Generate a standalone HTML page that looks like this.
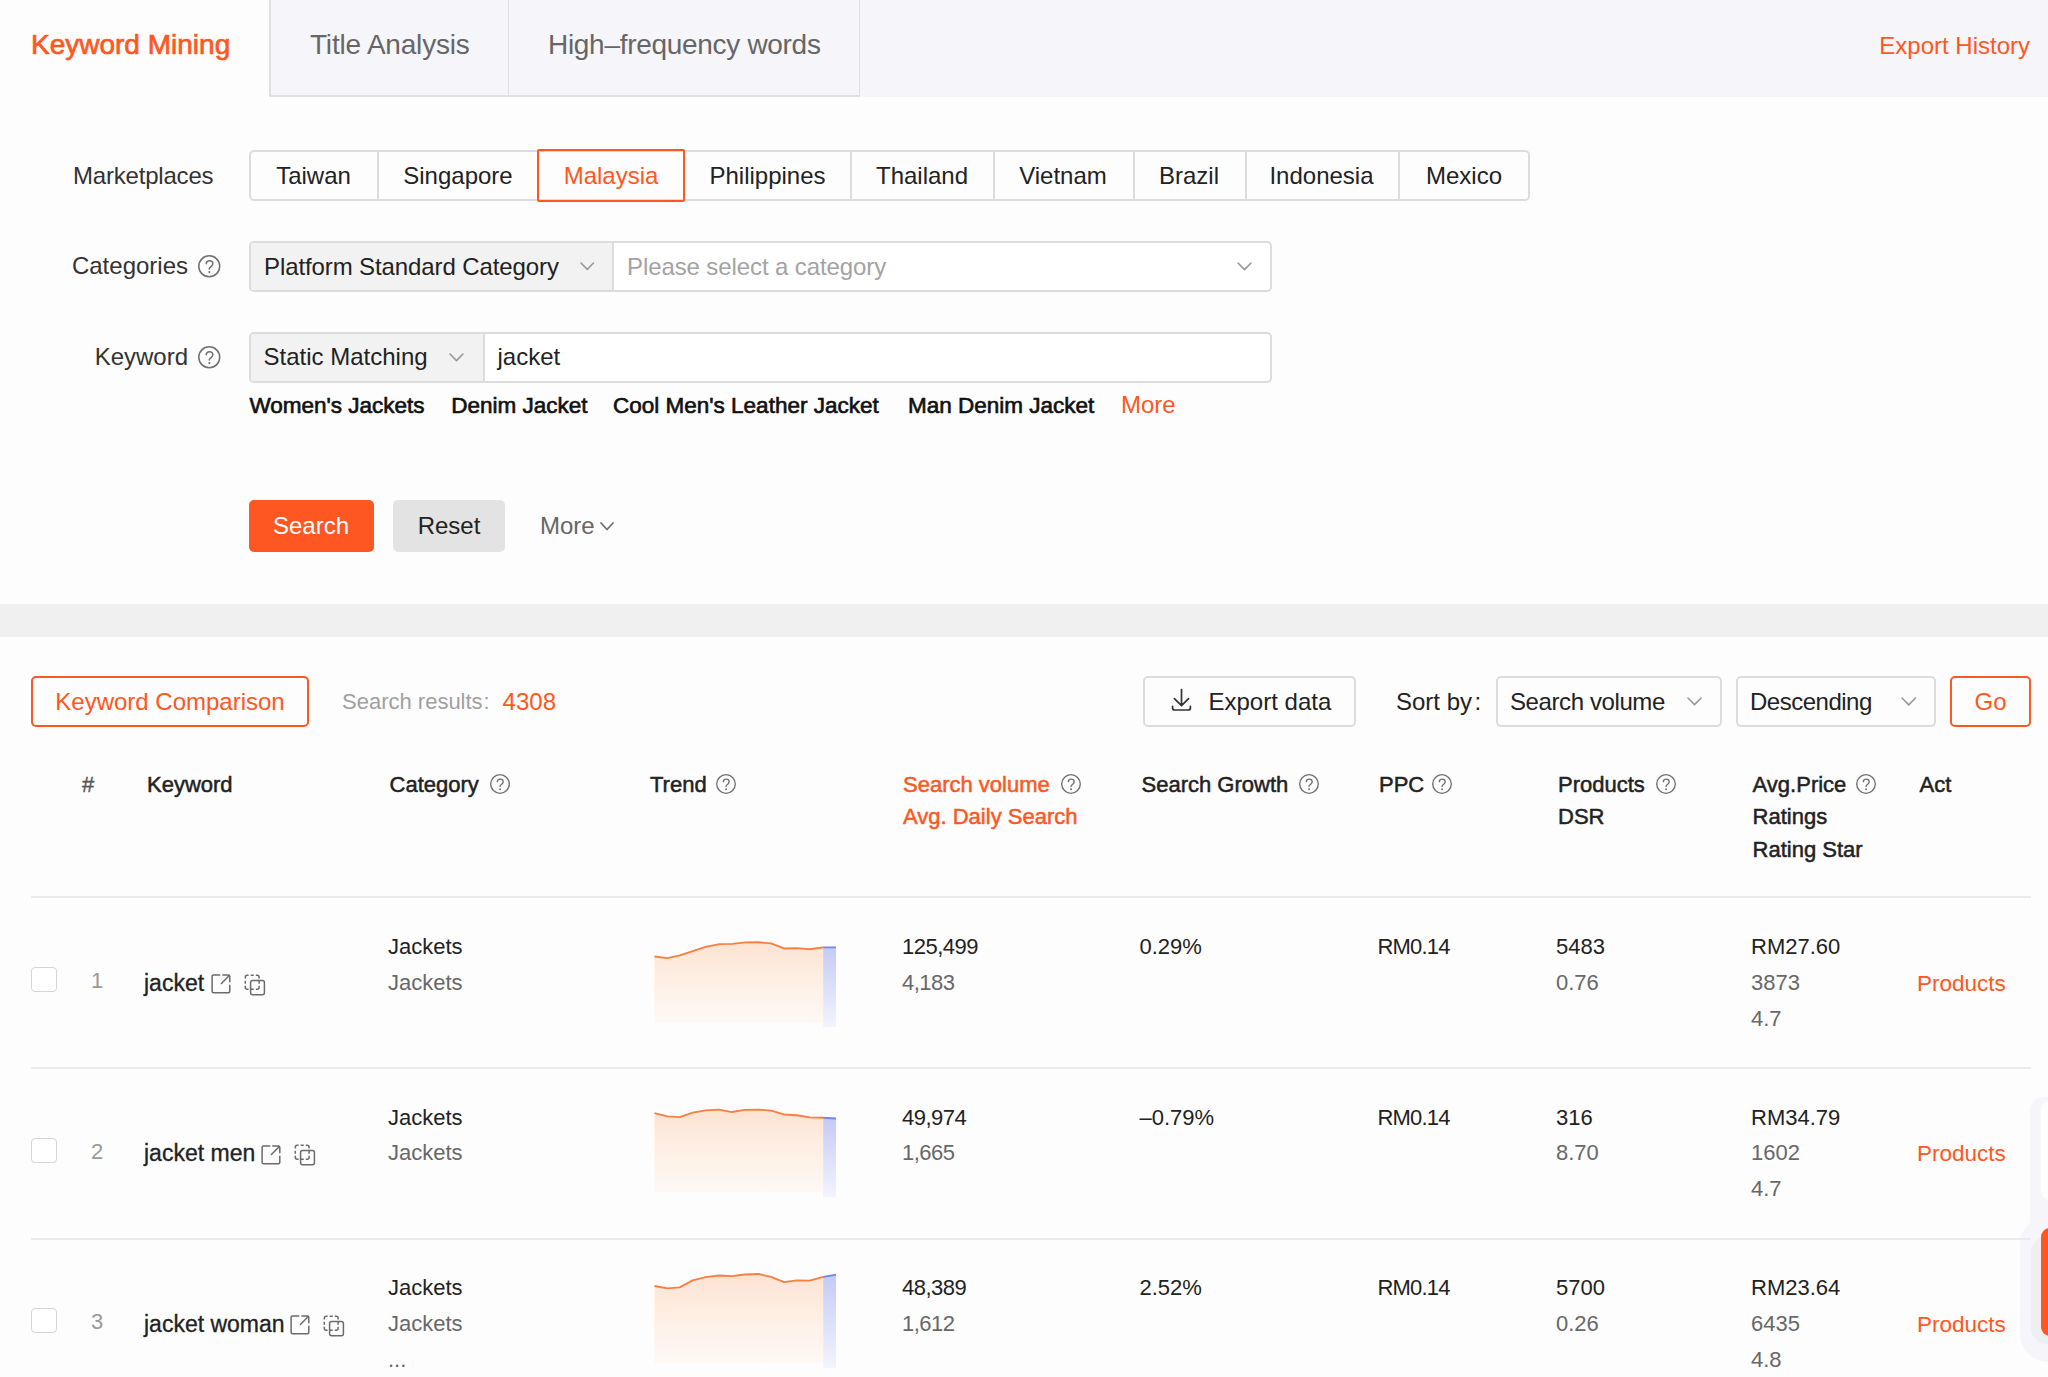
<!DOCTYPE html>
<html><head><meta charset="utf-8">
<style>
*{box-sizing:border-box;margin:0;padding:0}
html,body{width:2048px;height:1377px;overflow:hidden;background:#fdfdfd}
body{position:relative;font-family:"Liberation Sans",sans-serif;color:#222;font-size:24px}
.a{position:absolute;white-space:nowrap}
.t{position:absolute;white-space:nowrap;line-height:40px;height:40px}
svg{display:block}
</style></head><body>
<div class="a" style="left:2030px;top:1097px;width:40px;height:134px;background:#f6f6fa;border-radius:13px 0 0 13px"></div>
<div class="a" style="left:2019.5px;top:1216px;width:60px;height:146px;background:#f6f6fa;border-radius:28px"></div>
<div class="a" style="left:2030.5px;top:1236px;width:40px;height:108px;background:#efeff1;border-radius:16px"></div>
<div class="a" style="left:2041.3px;top:1228px;width:20px;height:108px;background:#ff5722;border-radius:9px"></div>
<div class="a" style="left:2041px;top:1100px;width:20px;height:100px;background:#fdfdfd;border-radius:9px 0 0 9px"></div>
<div class="a" style="left:0px;top:0px;width:2048px;height:97px;background:#f6f5fa"></div>
<div class="a" style="left:0px;top:0px;width:269px;height:97px;background:#fdfdfd"></div>
<div class="a" style="left:269px;top:0px;width:1.6px;height:97px;background:#e0e0e0"></div>
<div class="a" style="left:507.5px;top:0px;width:1.6px;height:97px;background:#e0e0e0"></div>
<div class="a" style="left:858.5px;top:0px;width:1.6px;height:97px;background:#e0e0e0"></div>
<div class="a" style="left:269px;top:95.4px;width:591px;height:1.6px;background:#e0e0e0"></div>
<div class="t" style="left:31px;top:24.799999999999997px;font-size:28px;color:#ff5722;-webkit-text-stroke:0.7px #ff5722">Keyword Mining</div>
<div class="t" style="left:310px;top:25px;font-size:28px;color:#666;letter-spacing:-0.2px">Title Analysis</div>
<div class="t" style="left:548px;top:25px;font-size:28px;color:#666;letter-spacing:-0.3px">High–frequency words</div>
<div class="t" style="right:18px;top:25.5px;font-size:24px;color:#ff5722;">Export History</div>
<div class="t" style="left:73px;top:155.8px;font-size:24px;color:#333;letter-spacing:-0.2px">Marketplaces</div>
<div class="a" style="left:249px;top:150px;width:1281px;height:51px;border:2px solid #dcdcdc;border-radius:5px"></div>
<div class="t" style="left:249px;top:155.8px;font-size:24px;color:#222;width:129px;text-align:center;">Taiwan</div>
<div class="a" style="left:377.4px;top:150px;width:2px;height:51px;background:#dcdcdc"></div>
<div class="t" style="left:378px;top:155.8px;font-size:24px;color:#222;width:160px;text-align:center;">Singapore</div>
<div class="t" style="left:538px;top:155.8px;font-size:24px;color:#ff5722;width:146px;text-align:center;">Malaysia</div>
<div class="t" style="left:684px;top:155.8px;font-size:24px;color:#222;width:167px;text-align:center;">Philippines</div>
<div class="a" style="left:849.9px;top:150px;width:2px;height:51px;background:#dcdcdc"></div>
<div class="t" style="left:851px;top:155.8px;font-size:24px;color:#222;width:142px;text-align:center;">Thailand</div>
<div class="a" style="left:992.8px;top:150px;width:2px;height:51px;background:#dcdcdc"></div>
<div class="t" style="left:993px;top:155.8px;font-size:24px;color:#222;width:140px;text-align:center;">Vietnam</div>
<div class="a" style="left:1132.8px;top:150px;width:2px;height:51px;background:#dcdcdc"></div>
<div class="t" style="left:1133px;top:155.8px;font-size:24px;color:#222;width:112px;text-align:center;">Brazil</div>
<div class="a" style="left:1244.6px;top:150px;width:2px;height:51px;background:#dcdcdc"></div>
<div class="t" style="left:1245px;top:155.8px;font-size:24px;color:#222;width:153px;text-align:center;">Indonesia</div>
<div class="a" style="left:1398.4px;top:150px;width:2px;height:51px;background:#dcdcdc"></div>
<div class="t" style="left:1398px;top:155.8px;font-size:24px;color:#222;width:132px;text-align:center;">Mexico</div>
<div class="a" style="left:537px;top:149px;width:148px;height:53px;border:2px solid #ff5722;border-radius:2px"></div>
<div class="t" style="right:1860px;top:246.39999999999998px;font-size:24px;color:#333;">Categories</div>
<svg class="a" style="left:198.05px;top:254.85000000000002px;overflow:visible" width="22.5" height="22.5" viewBox="0 0 20 20"><circle cx="10" cy="10" r="9.3" fill="none" stroke="#707070" stroke-width="1.35"/><path d="M7.3 7.7C7.5 6.0 8.6 5.1 10.1 5.1C11.8 5.1 13.2 6.2 13.2 7.8C13.2 9.0 12.4 9.6 11.6 10.3C10.6 11.1 10.0 11.6 10.0 12.5" fill="none" stroke="#707070" stroke-width="1.35" stroke-linecap="round"/><circle cx="10.1" cy="15.2" r="0.95" fill="#707070"/></svg>
<div class="a" style="left:249px;top:240.6px;width:1023px;height:51px;border:2px solid #dcdcdc;border-radius:5px;background:#fff"></div>
<div class="a" style="left:251px;top:242.6px;width:361px;height:47px;background:#f2f2f2;border-radius:3px 0 0 3px"></div>
<div class="a" style="left:612.4px;top:242.6px;width:2px;height:47px;background:#dcdcdc"></div>
<div class="t" style="left:264px;top:247px;font-size:24px;color:#222;letter-spacing:-0.1px">Platform Standard Category</div>
<svg class="a" style="left:580.5px;top:263.4125px;overflow:visible" width="12.5" height="6.375" viewBox="0 0 12.5 6.375"><polyline points="0,0 6.25,6.375 12.5,0" fill="none" stroke="#999" stroke-width="1.6" stroke-linecap="round" stroke-linejoin="round"/></svg>
<div class="t" style="left:627px;top:247px;font-size:24px;color:#a3a3a3;letter-spacing:-0.1px">Please select a category</div>
<svg class="a" style="left:1238px;top:263.285px;overflow:visible" width="13" height="6.63" viewBox="0 0 13 6.63"><polyline points="0,0 6.5,6.63 13,0" fill="none" stroke="#999" stroke-width="1.6" stroke-linecap="round" stroke-linejoin="round"/></svg>
<div class="t" style="right:1860px;top:337.2px;font-size:24px;color:#333;">Keyword</div>
<svg class="a" style="left:198.05px;top:345.85px;overflow:visible" width="22.5" height="22.5" viewBox="0 0 20 20"><circle cx="10" cy="10" r="9.3" fill="none" stroke="#707070" stroke-width="1.35"/><path d="M7.3 7.7C7.5 6.0 8.6 5.1 10.1 5.1C11.8 5.1 13.2 6.2 13.2 7.8C13.2 9.0 12.4 9.6 11.6 10.3C10.6 11.1 10.0 11.6 10.0 12.5" fill="none" stroke="#707070" stroke-width="1.35" stroke-linecap="round"/><circle cx="10.1" cy="15.2" r="0.95" fill="#707070"/></svg>
<div class="a" style="left:249px;top:332px;width:1023px;height:51px;border:2px solid #dcdcdc;border-radius:5px;background:#fff"></div>
<div class="a" style="left:251px;top:334px;width:232px;height:47px;background:#f2f2f2;border-radius:3px 0 0 3px"></div>
<div class="a" style="left:483px;top:334px;width:2px;height:47px;background:#dcdcdc"></div>
<div class="t" style="left:263.5px;top:337.2px;font-size:24px;color:#222;">Static Matching</div>
<svg class="a" style="left:450px;top:354.185px;overflow:visible" width="13" height="6.63" viewBox="0 0 13 6.63"><polyline points="0,0 6.5,6.63 13,0" fill="none" stroke="#999" stroke-width="1.6" stroke-linecap="round" stroke-linejoin="round"/></svg>
<div class="t" style="left:497.5px;top:337.2px;font-size:24px;color:#222;">jacket</div>
<div class="t" style="left:249.4px;top:386.2px;font-size:22.5px;color:#111;-webkit-text-stroke:0.65px #111">Women's Jackets</div>
<div class="t" style="left:451.3px;top:386.2px;font-size:22.5px;color:#111;-webkit-text-stroke:0.65px #111">Denim Jacket</div>
<div class="t" style="left:613px;top:386.2px;font-size:22.5px;color:#111;-webkit-text-stroke:0.65px #111">Cool Men's Leather Jacket</div>
<div class="t" style="left:908px;top:386.2px;font-size:22.5px;color:#111;-webkit-text-stroke:0.65px #111">Man Denim Jacket</div>
<div class="t" style="left:1121px;top:385.4px;font-size:24px;color:#ff5722;">More</div>
<div class="a" style="left:248.5px;top:500px;width:125px;height:52px;background:#ff5722;border-radius:5px"></div>
<div class="t" style="left:248.5px;top:506px;font-size:24px;color:#fff;width:125px;text-align:center;">Search</div>
<div class="a" style="left:393px;top:500px;width:112px;height:52px;background:#e3e3e3;border-radius:5px"></div>
<div class="t" style="left:393px;top:506px;font-size:24px;color:#222;width:112px;text-align:center;">Reset</div>
<div class="t" style="left:540px;top:506px;font-size:24px;color:#666;">More</div>
<svg class="a" style="left:600.6px;top:523.05px;overflow:visible" width="12.0" height="6.5" viewBox="0 0 12.0 6.5"><polyline points="0,0 6.0,6.5 12.0,0" fill="none" stroke="#707070" stroke-width="1.8" stroke-linecap="round" stroke-linejoin="round"/></svg>
<div class="a" style="left:0px;top:604px;width:2048px;height:32.5px;background:#f0f0f0"></div>
<div class="a" style="left:31px;top:676px;width:278px;height:51px;border:2px solid #ff5722;border-radius:5px"></div>
<div class="t" style="left:31px;top:682px;font-size:24px;color:#ff5722;width:278px;text-align:center;">Keyword Comparison</div>
<div class="t" style="left:342px;top:682px;font-size:22px;color:#a0a0a0;">Search results</div>
<div class="t" style="left:483.5px;top:682px;font-size:22px;color:#a0a0a0;">:</div>
<div class="t" style="left:502.6px;top:682px;font-size:24px;color:#ff5722;">4308</div>
<div class="a" style="left:1143px;top:676px;width:213px;height:51px;border:2px solid #dcdcdc;border-radius:5px"></div>
<svg class="a" style="left:1165px;top:682px" width="35" height="36" viewBox="0 0 35 36"><path d="M16.5 7.6V23.2M9.4 16.7L16.5 23.6L23.6 16.7M7.6 24.3V26Q7.6 28 9.6 28H23.4Q25.4 28 25.4 26V24.3" fill="none" stroke="#333" stroke-width="1.7" stroke-linecap="round" stroke-linejoin="round"/></svg>
<div class="t" style="left:1208.5px;top:682px;font-size:24px;color:#222;">Export data</div>
<div class="t" style="left:1396px;top:682px;font-size:24px;color:#222;">Sort by</div>
<div class="t" style="left:1474.5px;top:682px;font-size:24px;color:#222;">:</div>
<div class="a" style="left:1496px;top:676px;width:226px;height:51px;border:2px solid #dcdcdc;border-radius:5px"></div>
<div class="t" style="left:1510px;top:682px;font-size:24px;color:#222;letter-spacing:-0.4px">Search volume</div>
<svg class="a" style="left:1688.1px;top:698.1595px;overflow:visible" width="13.100000000000136" height="6.681000000000069" viewBox="0 0 13.100000000000136 6.681000000000069"><polyline points="0,0 6.550000000000068,6.681000000000069 13.100000000000136,0" fill="none" stroke="#999" stroke-width="1.6" stroke-linecap="round" stroke-linejoin="round"/></svg>
<div class="a" style="left:1736px;top:676px;width:200px;height:51px;border:2px solid #dcdcdc;border-radius:5px"></div>
<div class="t" style="left:1750px;top:682px;font-size:24px;color:#222;letter-spacing:-0.5px">Descending</div>
<svg class="a" style="left:1902px;top:698.0575px;overflow:visible" width="13.5" height="6.885" viewBox="0 0 13.5 6.885"><polyline points="0,0 6.75,6.885 13.5,0" fill="none" stroke="#999" stroke-width="1.6" stroke-linecap="round" stroke-linejoin="round"/></svg>
<div class="a" style="left:1950px;top:676px;width:81px;height:51px;border:2px solid #ff5722;border-radius:5px"></div>
<div class="t" style="left:1950px;top:682px;font-size:24px;color:#ff5722;width:81px;text-align:center;">Go</div>
<div class="t" style="left:82px;top:765px;font-size:22px;color:#555;-webkit-text-stroke:0.4px #555">#</div>
<div class="t" style="left:147px;top:765px;font-size:22px;color:#222;-webkit-text-stroke:0.5px currentColor">Keyword</div>
<div class="t" style="left:389.6px;top:765px;font-size:22px;color:#222;-webkit-text-stroke:0.5px currentColor">Category</div>
<svg class="a" style="left:490.0px;top:774.0px;overflow:visible" width="20" height="20" viewBox="0 0 20 20"><circle cx="10" cy="10" r="9.3" fill="none" stroke="#707070" stroke-width="1.35"/><path d="M7.3 7.7C7.5 6.0 8.6 5.1 10.1 5.1C11.8 5.1 13.2 6.2 13.2 7.8C13.2 9.0 12.4 9.6 11.6 10.3C10.6 11.1 10.0 11.6 10.0 12.5" fill="none" stroke="#707070" stroke-width="1.35" stroke-linecap="round"/><circle cx="10.1" cy="15.2" r="0.95" fill="#707070"/></svg>
<div class="t" style="left:650px;top:765px;font-size:22px;color:#222;-webkit-text-stroke:0.5px currentColor">Trend</div>
<svg class="a" style="left:716.0px;top:774.0px;overflow:visible" width="20" height="20" viewBox="0 0 20 20"><circle cx="10" cy="10" r="9.3" fill="none" stroke="#707070" stroke-width="1.35"/><path d="M7.3 7.7C7.5 6.0 8.6 5.1 10.1 5.1C11.8 5.1 13.2 6.2 13.2 7.8C13.2 9.0 12.4 9.6 11.6 10.3C10.6 11.1 10.0 11.6 10.0 12.5" fill="none" stroke="#707070" stroke-width="1.35" stroke-linecap="round"/><circle cx="10.1" cy="15.2" r="0.95" fill="#707070"/></svg>
<div class="t" style="left:903px;top:765px;font-size:22px;color:#ff5722;-webkit-text-stroke:0.5px currentColor">Search volume</div>
<svg class="a" style="left:1061.0px;top:774.0px;overflow:visible" width="20" height="20" viewBox="0 0 20 20"><circle cx="10" cy="10" r="9.3" fill="none" stroke="#707070" stroke-width="1.35"/><path d="M7.3 7.7C7.5 6.0 8.6 5.1 10.1 5.1C11.8 5.1 13.2 6.2 13.2 7.8C13.2 9.0 12.4 9.6 11.6 10.3C10.6 11.1 10.0 11.6 10.0 12.5" fill="none" stroke="#707070" stroke-width="1.35" stroke-linecap="round"/><circle cx="10.1" cy="15.2" r="0.95" fill="#707070"/></svg>
<div class="t" style="left:903px;top:797.2px;font-size:22px;color:#ff5722;-webkit-text-stroke:0.5px currentColor">Avg. Daily Search</div>
<div class="t" style="left:1141.5px;top:765px;font-size:22px;color:#222;-webkit-text-stroke:0.5px currentColor">Search Growth</div>
<svg class="a" style="left:1299.0px;top:774.0px;overflow:visible" width="20" height="20" viewBox="0 0 20 20"><circle cx="10" cy="10" r="9.3" fill="none" stroke="#707070" stroke-width="1.35"/><path d="M7.3 7.7C7.5 6.0 8.6 5.1 10.1 5.1C11.8 5.1 13.2 6.2 13.2 7.8C13.2 9.0 12.4 9.6 11.6 10.3C10.6 11.1 10.0 11.6 10.0 12.5" fill="none" stroke="#707070" stroke-width="1.35" stroke-linecap="round"/><circle cx="10.1" cy="15.2" r="0.95" fill="#707070"/></svg>
<div class="t" style="left:1379px;top:765px;font-size:22px;color:#222;-webkit-text-stroke:0.5px currentColor">PPC</div>
<svg class="a" style="left:1431.5px;top:774.0px;overflow:visible" width="20" height="20" viewBox="0 0 20 20"><circle cx="10" cy="10" r="9.3" fill="none" stroke="#707070" stroke-width="1.35"/><path d="M7.3 7.7C7.5 6.0 8.6 5.1 10.1 5.1C11.8 5.1 13.2 6.2 13.2 7.8C13.2 9.0 12.4 9.6 11.6 10.3C10.6 11.1 10.0 11.6 10.0 12.5" fill="none" stroke="#707070" stroke-width="1.35" stroke-linecap="round"/><circle cx="10.1" cy="15.2" r="0.95" fill="#707070"/></svg>
<div class="t" style="left:1558px;top:765px;font-size:22px;color:#222;-webkit-text-stroke:0.5px currentColor">Products</div>
<svg class="a" style="left:1656.0px;top:774.0px;overflow:visible" width="20" height="20" viewBox="0 0 20 20"><circle cx="10" cy="10" r="9.3" fill="none" stroke="#707070" stroke-width="1.35"/><path d="M7.3 7.7C7.5 6.0 8.6 5.1 10.1 5.1C11.8 5.1 13.2 6.2 13.2 7.8C13.2 9.0 12.4 9.6 11.6 10.3C10.6 11.1 10.0 11.6 10.0 12.5" fill="none" stroke="#707070" stroke-width="1.35" stroke-linecap="round"/><circle cx="10.1" cy="15.2" r="0.95" fill="#707070"/></svg>
<div class="t" style="left:1558px;top:797.2px;font-size:22px;color:#222;-webkit-text-stroke:0.5px currentColor">DSR</div>
<div class="t" style="left:1752.6px;top:765px;font-size:22px;color:#222;-webkit-text-stroke:0.5px currentColor">Avg.Price</div>
<svg class="a" style="left:1856.0px;top:774.0px;overflow:visible" width="20" height="20" viewBox="0 0 20 20"><circle cx="10" cy="10" r="9.3" fill="none" stroke="#707070" stroke-width="1.35"/><path d="M7.3 7.7C7.5 6.0 8.6 5.1 10.1 5.1C11.8 5.1 13.2 6.2 13.2 7.8C13.2 9.0 12.4 9.6 11.6 10.3C10.6 11.1 10.0 11.6 10.0 12.5" fill="none" stroke="#707070" stroke-width="1.35" stroke-linecap="round"/><circle cx="10.1" cy="15.2" r="0.95" fill="#707070"/></svg>
<div class="t" style="left:1752.6px;top:797.2px;font-size:22px;color:#222;-webkit-text-stroke:0.5px currentColor">Ratings</div>
<div class="t" style="left:1752.6px;top:830px;font-size:22px;color:#222;-webkit-text-stroke:0.5px currentColor">Rating Star</div>
<div class="t" style="left:1919.6px;top:765px;font-size:22px;color:#222;-webkit-text-stroke:0.5px currentColor">Act</div>
<div class="a" style="left:31px;top:896.2px;width:2000px;height:2px;background:#ebebeb"></div>
<div class="a" style="left:31.2px;top:967.3px;width:25.5px;height:25.2px;border:1.6px solid #d6d6d6;border-radius:4px;background:#fff"></div>
<div class="t" style="left:80px;top:961.4px;font-size:22px;color:#999;width:34px;text-align:center;">1</div>
<div class="t" style="left:144px;top:962.9px;font-size:23px;color:#222;-webkit-text-stroke:0.3px #222">jacket<span style="display:inline-block;width:0"></span></div>
<div class="a" style="left:144px;top:962.9px;height:40px;display:flex;align-items:center;font-size:23px;color:transparent">jacket<svg style="margin-left:7px;margin-top:3px;overflow:visible" width="20" height="20" viewBox="0 0 20 20"><g fill="none" stroke="#6b6b6b" stroke-width="1.5" stroke-linecap="round" stroke-linejoin="round"><path d="M8.7 1H2.6Q1.1 1 1.1 2.5V17.3Q1.1 18.8 2.6 18.8H17.3Q18.8 18.8 18.8 17.3V11.2"/><path d="M11.8 1H17.3Q18.8 1 18.8 2.5V7.7"/><path d="M10.4 9.5L18.3 1.5"/></g></svg><svg style="margin-left:13px;margin-top:4px;overflow:visible" width="22" height="22" viewBox="0 0 22 22"><g fill="none" stroke="#6b6b6b" stroke-width="1.5"><path d="M1.3 4.6V3.2Q1.3 1.2 3.3 1.2H4.6M11.8 1.2H13.1Q15.1 1.2 15.1 3.2V4.6M15.1 11.8V13.2Q15.1 15.2 13.1 15.2H11.8M4.6 15.2H3.3Q1.3 15.2 1.3 13.2V11.8M6.65 1.2H9.75M15.1 6.65V9.75M6.65 15.2H9.75M1.3 6.65V9.75"/><rect x="6.6" y="6.6" width="13.8" height="14.1" rx="2"/></g></svg></div>
<div class="t" style="left:388px;top:927.3px;font-size:22px;color:#222;">Jackets</div>
<div class="t" style="left:388px;top:962.9px;font-size:22px;color:#686868;">Jackets</div>
<svg class="a" style="left:640px;top:920px" width="220" height="120" viewBox="0 0 2048 1117" preserveAspectRatio="none"><defs><linearGradient id="og0" x1="0" y1="0" x2="0" y2="1"><stop offset="0" stop-color="#fddcc6" stop-opacity="0.8"/><stop offset="1" stop-color="#fff3ea" stop-opacity="0.5"/></linearGradient><linearGradient id="bg0" x1="0" y1="0" x2="0" y2="1"><stop offset="0" stop-color="#c3cbf6"/><stop offset="1" stop-color="#f3f4fd"/></linearGradient></defs><path d="M135,340 L255,355 L370,330 L490,290 L610,250 L740,225 L860,222 L980,208 L1100,207 L1220,218 L1340,265 L1460,262 L1580,272 L1705,255 L1705,960 L135,960 Z" fill="url(#og0)"/><path d="M1705,255 L1825,255 L1825,995 L1705,995 Z" fill="url(#bg0)"/><polyline points="135,340 255,355 370,330 490,290 610,250 740,225 860,222 980,208 1100,207 1220,218 1340,265 1460,262 1580,272 1705,255" fill="none" stroke="#fb7e40" stroke-width="17" stroke-linejoin="round"/><polyline points="1705,255 1825,255" fill="none" stroke="#7486ef" stroke-width="17"/></svg>
<div class="t" style="left:902px;top:927.3px;font-size:22px;color:#222;letter-spacing:-0.5px">125,499</div>
<div class="t" style="left:902px;top:962.9px;font-size:22px;color:#686868;letter-spacing:-0.5px">4,183</div>
<div class="t" style="left:1139.5px;top:927.3px;font-size:22px;color:#222;">0.29%</div>
<div class="t" style="left:1377.5px;top:927.3px;font-size:22px;color:#222;letter-spacing:-0.8px">RM0.14</div>
<div class="t" style="left:1556px;top:927.3px;font-size:22px;color:#222;">5483</div>
<div class="t" style="left:1556px;top:962.9px;font-size:22px;color:#686868;">0.76</div>
<div class="t" style="left:1751px;top:927.3px;font-size:22px;color:#222;">RM27.60</div>
<div class="t" style="left:1751px;top:962.9px;font-size:22px;color:#686868;">3873</div>
<div class="t" style="left:1751px;top:998.6px;font-size:22px;color:#686868;">4.7</div>
<div class="t" style="left:1917px;top:963.6999999999999px;font-size:22.5px;color:#ff5722;">Products</div>
<div class="a" style="left:31px;top:1067.0px;width:2000px;height:2px;background:#ebebeb"></div>
<div class="a" style="left:31.2px;top:1137.8px;width:25.5px;height:25.2px;border:1.6px solid #d6d6d6;border-radius:4px;background:#fff"></div>
<div class="t" style="left:80px;top:1131.9px;font-size:22px;color:#999;width:34px;text-align:center;">2</div>
<div class="t" style="left:144px;top:1133.4px;font-size:23px;color:#222;-webkit-text-stroke:0.3px #222">jacket men<span style="display:inline-block;width:0"></span></div>
<div class="a" style="left:144px;top:1133.4px;height:40px;display:flex;align-items:center;font-size:23px;color:transparent">jacket men<svg style="margin-left:5.5px;margin-top:3px;overflow:visible" width="20" height="20" viewBox="0 0 20 20"><g fill="none" stroke="#6b6b6b" stroke-width="1.5" stroke-linecap="round" stroke-linejoin="round"><path d="M8.7 1H2.6Q1.1 1 1.1 2.5V17.3Q1.1 18.8 2.6 18.8H17.3Q18.8 18.8 18.8 17.3V11.2"/><path d="M11.8 1H17.3Q18.8 1 18.8 2.5V7.7"/><path d="M10.4 9.5L18.3 1.5"/></g></svg><svg style="margin-left:13px;margin-top:4px;overflow:visible" width="22" height="22" viewBox="0 0 22 22"><g fill="none" stroke="#6b6b6b" stroke-width="1.5"><path d="M1.3 4.6V3.2Q1.3 1.2 3.3 1.2H4.6M11.8 1.2H13.1Q15.1 1.2 15.1 3.2V4.6M15.1 11.8V13.2Q15.1 15.2 13.1 15.2H11.8M4.6 15.2H3.3Q1.3 15.2 1.3 13.2V11.8M6.65 1.2H9.75M15.1 6.65V9.75M6.65 15.2H9.75M1.3 6.65V9.75"/><rect x="6.6" y="6.6" width="13.8" height="14.1" rx="2"/></g></svg></div>
<div class="t" style="left:388px;top:1097.8px;font-size:22px;color:#222;">Jackets</div>
<div class="t" style="left:388px;top:1133.4px;font-size:22px;color:#686868;">Jackets</div>
<svg class="a" style="left:640px;top:1090px" width="220" height="120" viewBox="0 0 2048 1117" preserveAspectRatio="none"><defs><linearGradient id="og1" x1="0" y1="0" x2="0" y2="1"><stop offset="0" stop-color="#fddcc6" stop-opacity="0.8"/><stop offset="1" stop-color="#fff3ea" stop-opacity="0.5"/></linearGradient><linearGradient id="bg1" x1="0" y1="0" x2="0" y2="1"><stop offset="0" stop-color="#c3cbf6"/><stop offset="1" stop-color="#f3f4fd"/></linearGradient></defs><path d="M135,215 L255,245 L370,252 L490,210 L610,190 L735,182 L855,205 L975,185 L1100,182 L1220,192 L1340,228 L1460,235 L1580,255 L1705,258 L1705,955 L135,955 Z" fill="url(#og1)"/><path d="M1705,258 L1825,265 L1825,1000 L1705,1000 Z" fill="url(#bg1)"/><polyline points="135,215 255,245 370,252 490,210 610,190 735,182 855,205 975,185 1100,182 1220,192 1340,228 1460,235 1580,255 1705,258" fill="none" stroke="#fb7e40" stroke-width="17" stroke-linejoin="round"/><polyline points="1705,258 1825,265" fill="none" stroke="#7486ef" stroke-width="17"/></svg>
<div class="t" style="left:902px;top:1097.8px;font-size:22px;color:#222;letter-spacing:-0.5px">49,974</div>
<div class="t" style="left:902px;top:1133.4px;font-size:22px;color:#686868;letter-spacing:-0.5px">1,665</div>
<div class="t" style="left:1139.5px;top:1097.8px;font-size:22px;color:#222;">–0.79%</div>
<div class="t" style="left:1377.5px;top:1097.8px;font-size:22px;color:#222;letter-spacing:-0.8px">RM0.14</div>
<div class="t" style="left:1556px;top:1097.8px;font-size:22px;color:#222;">316</div>
<div class="t" style="left:1556px;top:1133.4px;font-size:22px;color:#686868;">8.70</div>
<div class="t" style="left:1751px;top:1097.8px;font-size:22px;color:#222;">RM34.79</div>
<div class="t" style="left:1751px;top:1133.4px;font-size:22px;color:#686868;">1602</div>
<div class="t" style="left:1751px;top:1169.1px;font-size:22px;color:#686868;">4.7</div>
<div class="t" style="left:1917px;top:1134.2px;font-size:22.5px;color:#ff5722;">Products</div>
<div class="a" style="left:31px;top:1237.5px;width:2000px;height:2px;background:#ebebeb"></div>
<div class="a" style="left:31.2px;top:1308.3px;width:25.5px;height:25.2px;border:1.6px solid #d6d6d6;border-radius:4px;background:#fff"></div>
<div class="t" style="left:80px;top:1302.4px;font-size:22px;color:#999;width:34px;text-align:center;">3</div>
<div class="t" style="left:144px;top:1303.9px;font-size:23px;color:#222;-webkit-text-stroke:0.3px #222">jacket woman<span style="display:inline-block;width:0"></span></div>
<div class="a" style="left:144px;top:1303.9px;height:40px;display:flex;align-items:center;font-size:23px;color:transparent">jacket woman<svg style="margin-left:5px;margin-top:3px;overflow:visible" width="20" height="20" viewBox="0 0 20 20"><g fill="none" stroke="#6b6b6b" stroke-width="1.5" stroke-linecap="round" stroke-linejoin="round"><path d="M8.7 1H2.6Q1.1 1 1.1 2.5V17.3Q1.1 18.8 2.6 18.8H17.3Q18.8 18.8 18.8 17.3V11.2"/><path d="M11.8 1H17.3Q18.8 1 18.8 2.5V7.7"/><path d="M10.4 9.5L18.3 1.5"/></g></svg><svg style="margin-left:13px;margin-top:4px;overflow:visible" width="22" height="22" viewBox="0 0 22 22"><g fill="none" stroke="#6b6b6b" stroke-width="1.5"><path d="M1.3 4.6V3.2Q1.3 1.2 3.3 1.2H4.6M11.8 1.2H13.1Q15.1 1.2 15.1 3.2V4.6M15.1 11.8V13.2Q15.1 15.2 13.1 15.2H11.8M4.6 15.2H3.3Q1.3 15.2 1.3 13.2V11.8M6.65 1.2H9.75M15.1 6.65V9.75M6.65 15.2H9.75M1.3 6.65V9.75"/><rect x="6.6" y="6.6" width="13.8" height="14.1" rx="2"/></g></svg></div>
<div class="t" style="left:388px;top:1268.3px;font-size:22px;color:#222;">Jackets</div>
<div class="t" style="left:388px;top:1303.9px;font-size:22px;color:#686868;">Jackets</div>
<div class="t" style="left:388px;top:1339.6px;font-size:22px;color:#686868;">...</div>
<svg class="a" style="left:640px;top:1257px" width="220" height="120" viewBox="0 0 2048 1117" preserveAspectRatio="none"><defs><linearGradient id="og2" x1="0" y1="0" x2="0" y2="1"><stop offset="0" stop-color="#fddcc6" stop-opacity="0.8"/><stop offset="1" stop-color="#fff3ea" stop-opacity="0.5"/></linearGradient><linearGradient id="bg2" x1="0" y1="0" x2="0" y2="1"><stop offset="0" stop-color="#c3cbf6"/><stop offset="1" stop-color="#f3f4fd"/></linearGradient></defs><path d="M135,270 L255,292 L370,283 L490,218 L610,188 L735,172 L855,178 L975,163 L1100,158 L1220,185 L1340,233 L1460,217 L1580,220 L1705,185 L1705,985 L135,985 Z" fill="url(#og2)"/><path d="M1705,185 L1825,165 L1825,1030 L1705,1030 Z" fill="url(#bg2)"/><polyline points="135,270 255,292 370,283 490,218 610,188 735,172 855,178 975,163 1100,158 1220,185 1340,233 1460,217 1580,220 1705,185" fill="none" stroke="#fb7e40" stroke-width="17" stroke-linejoin="round"/><polyline points="1705,185 1825,165" fill="none" stroke="#7486ef" stroke-width="17"/></svg>
<div class="t" style="left:902px;top:1268.3px;font-size:22px;color:#222;letter-spacing:-0.5px">48,389</div>
<div class="t" style="left:902px;top:1303.9px;font-size:22px;color:#686868;letter-spacing:-0.5px">1,612</div>
<div class="t" style="left:1139.5px;top:1268.3px;font-size:22px;color:#222;">2.52%</div>
<div class="t" style="left:1377.5px;top:1268.3px;font-size:22px;color:#222;letter-spacing:-0.8px">RM0.14</div>
<div class="t" style="left:1556px;top:1268.3px;font-size:22px;color:#222;">5700</div>
<div class="t" style="left:1556px;top:1303.9px;font-size:22px;color:#686868;">0.26</div>
<div class="t" style="left:1751px;top:1268.3px;font-size:22px;color:#222;">RM23.64</div>
<div class="t" style="left:1751px;top:1303.9px;font-size:22px;color:#686868;">6435</div>
<div class="t" style="left:1751px;top:1339.6px;font-size:22px;color:#686868;">4.8</div>
<div class="t" style="left:1917px;top:1304.7px;font-size:22.5px;color:#ff5722;">Products</div>
</body></html>
